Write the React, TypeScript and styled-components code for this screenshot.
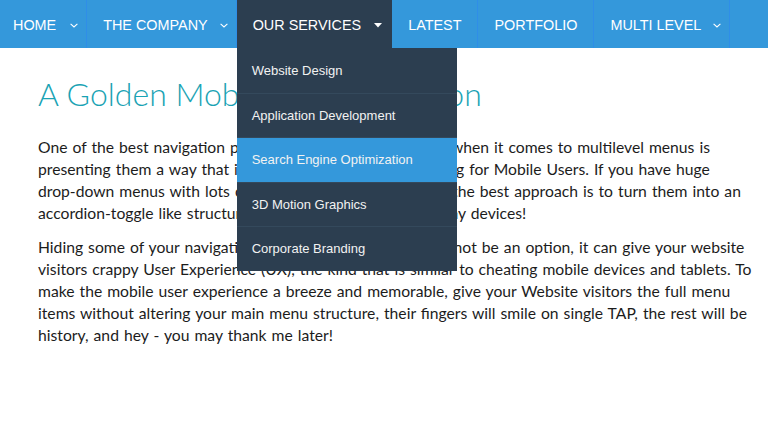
import React from "react";
import styled, { createGlobalStyle } from "styled-components";

const Global = createGlobalStyle`
  html, body { margin: 0; padding: 0; background: #fff; }
  body { font-family: "Liberation Sans", Arial, sans-serif; }
`;

const Page = styled.div`
  width: 768px;
  min-height: 423px;
  position: relative;
`;

const NavBar = styled.nav`
  display: flex;
  height: 48px;
  background: #3498db;
`;

const NavItem = styled.div<{ $active?: boolean; $arrow?: boolean; $first?: boolean }>`
  position: relative;
  display: flex;
  align-items: center;
  height: 48px;
  box-sizing: border-box;
  padding: 2px ${(p) => (p.$arrow ? (p.$active ? "9px" : "8px") : "16px")} 0
    ${(p) => (p.$first ? "13px" : "16px")};
  background: ${(p) => (p.$active ? "#2c3e50" : "#3498db")};
  border-right: 1px solid ${(p) => (p.$active ? "#2c3e50" : "#2f8ee8")};
  color: #fff;
  font-size: 14.4px;
  text-transform: uppercase;
  white-space: nowrap;
`;

const Arrow = styled.span<{ $gap: number }>`
  display: inline-flex;
  margin-left: ${(p) => p.$gap}px;
`;

const Dropdown = styled.ul`
  position: absolute;
  top: 48px;
  left: 0;
  width: 220px;
  margin: 0;
  padding: 0;
  list-style: none;
  background: #2c3e50;
  z-index: 5;
`;

const DropItem = styled.li<{ $active?: boolean }>`
  box-sizing: border-box;
  height: 44.5px;
  display: flex;
  align-items: center;
  padding: 0 15px;
  font-size: 13px;
  color: #f2f2f2;
  text-transform: none;
  background: ${(p) => (p.$active ? "#3498db" : "#2c3e50")};
  & + & {
    border-top: 1px solid #34495c;
  }
`;

const Content = styled.main`
  padding: 22px 0 0 38px;
  font-family: "Lato", "Segoe UI", sans-serif;
`;

const Heading = styled.h1`
  margin: 0 0 18px;
  font-family: "Lato", sans-serif;
  font-weight: 300;
  font-size: 32px;
  line-height: 48px;
  color: #1aa3b4;
  white-space: nowrap;
`;

const Para = styled.p`
  margin: 0 0 12px;
  font-size: 15.7px;
  line-height: 22px;
  word-spacing: 1px;
  color: #1c1c1c;
  white-space: nowrap;
`;

const Chevron = () => (
  <svg width="8" height="5" viewBox="0 0 8 5">
    <polyline points="0.6,0.8 4,4 7.4,0.8" fill="none" stroke="#fff" strokeWidth="1.1" />
  </svg>
);

const Triangle = () => (
  <svg width="8" height="5" viewBox="0 0 8 5">
    <polygon points="0,0 8,0 4,4.6" fill="#fff" />
  </svg>
);

const services = [
  "Website Design",
  "Application Development",
  "Search Engine Optimization",
  "3D Motion Graphics",
  "Corporate Branding",
];

export default function App() {
  return (
    <Page>
      <Global />
      <NavBar>
        <NavItem $first $arrow>
          Home<Arrow $gap={14}><Chevron /></Arrow>
        </NavItem>
        <NavItem $arrow>
          The Company<Arrow $gap={12}><Chevron /></Arrow>
        </NavItem>
        <NavItem $active $arrow>
          Our Services<Arrow $gap={13}><Triangle /></Arrow>
          <Dropdown>
            {services.map((s, i) => (
              <DropItem key={s} $active={i === 2}>{s}</DropItem>
            ))}
          </Dropdown>
        </NavItem>
        <NavItem>Latest</NavItem>
        <NavItem>Portfolio</NavItem>
        <NavItem $arrow>
          Multi Level<Arrow $gap={12}><Chevron /></Arrow>
        </NavItem>
      </NavBar>
      <Content>
        <Heading>A Golden Mobile Menu Solution</Heading>
        <Para>
          One of the best navigation patterns for responsive designs when it comes to multilevel menus is<br />
          presenting them a way that is so simple to use and appealing for Mobile Users. If you have huge<br />
          drop-down menus with lots of sub-items inside them, then the best approach is to turn them into an<br />
          accordion-toggle like structure that is perfectly suited for tiny devices!
        </Para>
        <Para>
          Hiding some of your navigation items for mobile users may not be an option, it can give your website<br />
          visitors crappy User Experience (UX), the kind that is similar to cheating mobile devices and tablets. To<br />
          make the mobile user experience a breeze and memorable, give your Website visitors the full menu<br />
          items without altering your main menu structure, their fingers will smile on single TAP, the rest will be<br />
          history, and hey - you may thank me later!
        </Para>
      </Content>
    </Page>
  );
}
